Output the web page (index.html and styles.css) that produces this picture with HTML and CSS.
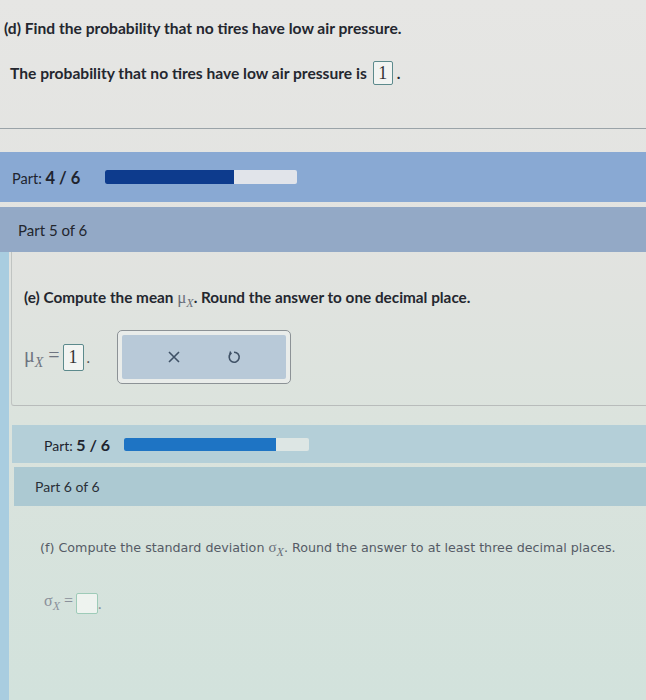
FILE: index.html
```html
<!DOCTYPE html>
<html>
<head>
<meta charset="utf-8">
<link rel="stylesheet" href="styles.css">
</head>
<body>
<div class="page">
  <section class="part-d">
    <p class="q-bold q-d">(d) Find the probability that no tires have low air pressure.</p>
    <p class="q-bold ans-d">The probability that no tires have low air pressure is <span class="box box-d">1</span>.</p>
  </section>
  <div class="rule"></div>

  <div class="band band-progress1">
    <span class="part-label">Part: <b>4 / 6</b></span>
    <div class="progress p1"><div class="fill" style="width:67%"></div></div>
  </div>
  <div class="band band-title1"><span>Part 5 of 6</span></div>

  <div class="lower">
    <section class="panel-e">
      <p class="q-bold q-e">(e) Compute the mean <span class="mu">μ<sub>X</sub></span>. Round the answer to one decimal place.</p>
      <div class="row-e">
        <span class="mathlbl">μ<sub>X</sub> = </span><span class="box box-e">1</span><span class="dot">.</span>
        <div class="tools">
          <div class="tools-inner">
            <svg class="ic" width="14" height="14" viewBox="0 0 14 14"><path d="M2 2 L12 12 M12 2 L2 12" stroke="#3f5166" stroke-width="1.6" fill="none"/></svg>
            <svg class="ic" width="14" height="14" viewBox="0 0 14 14"><path d="M4.2 3.2 A5 5 0 1 0 7 2.2" stroke="#3f5166" stroke-width="1.6" fill="none"/><path d="M3 0.8 L5 3.6 L2 4.6 Z" fill="#3f5166"/></svg>
          </div>
        </div>
      </div>
    </section>

    <div class="band band-progress2">
      <span class="part-label">Part: <b>5 / 6</b></span>
      <div class="progress p2"><div class="fill" style="width:82%"></div></div>
    </div>
    <div class="band band-title2"><span>Part 6 of 6</span></div>

    <section class="part-f">
      <p class="q-f">(f) Compute the standard deviation <span class="mu">σ<sub>X</sub></span>. Round the answer to at least three decimal places.</p>
      <div class="row-f"><span class="mathlbl light">σ<sub>X</sub> = </span><span class="box box-f"></span><span class="dot light">.</span></div>
    </section>
  </div>
</div>
</body>
</html>
```

FILE: styles.css
```css
html, body { margin: 0; padding: 0; }
body {
  width: 646px;
  height: 700px;
  overflow: hidden;
  background: linear-gradient(180deg, #e6e6e4 0%, #e2e3e0 35%, #dbe3dd 60%, #d2e2dc 100%);
  font-family: Lato, "Open Sans", sans-serif;
  color: #24272f;
}
.page { height: 700px; display: flex; flex-direction: column; }
p { margin: 0; }
.q-bold { font-weight: 700; font-size: 15.6px; }
.part-d { padding-top: 17px; }
.q-d { padding-left: 4px; height: 22px; line-height: 22px; }
.ans-d { padding-left: 10px; margin-top: 22px; line-height: 24px; display: flex; align-items: center; }
.box {
  display: inline-flex;
  align-items: center;
  justify-content: center;
  border: 1.5px solid #5c8a8c;
  border-radius: 2px;
  font-family: "Liberation Serif", serif;
  font-weight: 400;
  color: #333;
  background: #f2f4f2;
}
.box-d { width: 18px; height: 22px; margin-left: 6px; margin-right: 4px; font-size: 18px; }
.rule { height: 1px; background: #9aa3a8; margin-top: 43px; }
.band { display: flex; align-items: center; flex-shrink: 0; }
.band-progress1 { margin-top: 23px; height: 48px; background: #89a9d3; padding-left: 12px; padding-top: 2px; }
.part-label { font-size: 14.5px; color: #20242e; width: 93px; }
.part-label b { font-weight: 700; font-size: 16.5px; }
.progress { height: 14px; background: #e1e4ea; border-radius: 2px; overflow: hidden; }
.progress .fill { height: 100%; background: #0d3b8d; }
.p1 { width: 192px; margin-bottom: 2px; }
.band-title1 { margin-top: 5px; height: 45px; background: #93a9c6; padding-left: 18px; font-size: 15px; color: #22262e; }
.lower { border-left: 9px solid #a9cde0; flex: 1; }
.panel-e {
  height: 153px;
  margin-left: 2px;
  border-left: 1px solid #c0c4c2;
  border-bottom: 1px solid #b8bcbb;
  border-bottom-left-radius: 3px;
}
.q-e { font-size: 15.3px; padding-left: 12px; padding-top: 34px; line-height: 22px; }
.mu { font-family: "Liberation Serif", serif; font-weight: 400; font-size: 17px; color: #6a6f7a; }
.mu sub { font-style: italic; font-size: 12px; }
.row-e { display: flex; align-items: center; padding-left: 12px; margin-top: 16px; }
.mathlbl { font-family: "Liberation Serif", serif; font-size: 20px; color: #6e7480; margin-right: 3px; }
.mathlbl sub { font-style: italic; font-size: 14px; }
.box-e { width: 19px; height: 25px; font-size: 18px; margin-right: 3px; }
.dot { font-size: 15px; color: #555; }
.tools {
  margin-left: 27px;
  width: 164px;
  height: 44px;
  border: 1.5px solid #8c9296;
  border-radius: 5px;
  padding: 4px;
  background: #e9ecea;
  box-sizing: content-box;
}
.tools-inner {
  height: 100%;
  background: #b8c9d8;
  border-radius: 2px;
  display: flex;
  align-items: center;
  justify-content: space-around;
  padding: 0 22px;
}
.band-progress2 { margin-top: 19px; margin-left: 3px; height: 38px; background: #b4cfd8; padding-left: 32px; }
.band-progress2 .part-label { width: 80px; font-size: 14px; }
.band-progress2 .part-label b { font-size: 16px; }
.p2 { width: 185px; height: 13px; background: #dde6e4; }
.p2 .fill { background: #1e74c4; }
.band-title2 { margin-top: 4px; margin-left: 5px; height: 39px; background: #acc9d2; padding-left: 21px; font-size: 14px; color: #2a3038; }
.part-f { padding-left: 31px; }
.q-f { font-family: "DejaVu Sans", Verdana, sans-serif; font-size: 12.7px; color: #555b66; padding-top: 33px; }
.q-f .mu { font-size: 15px; }
.row-f { display: flex; align-items: center; padding-left: 4px; margin-top: 32px; }
.row-f .mathlbl { font-size: 16px; }
.row-f .mathlbl sub { font-size: 12px; }
.light { color: #8a909a; }
.box-f { width: 20px; height: 19px; border-color: #9ecbb8; background: #eef3ef; }
```
